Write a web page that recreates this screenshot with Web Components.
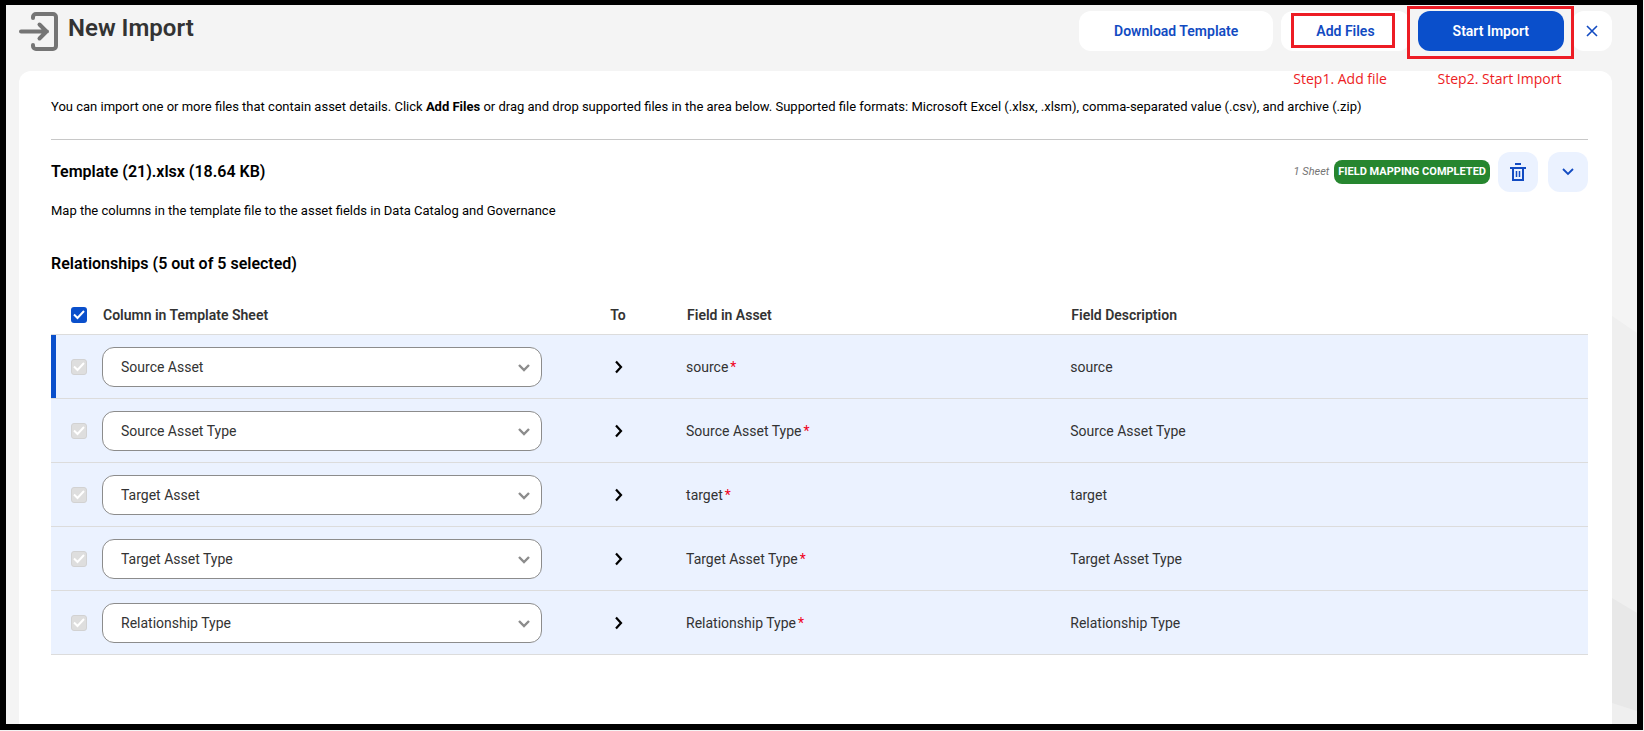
<!DOCTYPE html>
<html lang="en">
<head>
<meta charset="utf-8">
<title>New Import</title>
<style>
  * { box-sizing: border-box; }
  body {
    margin: 0;
    font-family: Roboto, "Liberation Sans", sans-serif;
    font-size: 14px;
    line-height: 20px;
    color: #333;
    background: #f4f4f4;
  }
</style>
</head>
<body>
<import-page>
  <page-header heading="New Import">
    <action-button>Download Template</action-button>
    <action-button note="Step1. Add file" outline="text">Add Files</action-button>
    <action-button primary note="Step2. Start Import" outline="button">Start Import</action-button>
    <action-button icon="close" label="Close"></action-button>
  </page-header>
  <import-panel>
    <span slot="intro">You can import one or more files that contain asset details. Click <b>Add Files</b> or drag and drop supported files in the area below. Supported file formats: Microsoft Excel (.xlsx, .xlsm), comma-separated value (.csv), and archive (.zip)</span>
    <file-summary name="Template (21).xlsx (18.64 KB)" sheets="1 Sheet" status="Field mapping completed">Map the columns in the template file to the asset fields in Data Catalog and Governance</file-summary>
    <mapping-table heading="Relationships (5 out of 5 selected)"></mapping-table>
  </import-panel>
</import-page>

<script>
"use strict";

////////////////////////////////////////////
// Constants
const BLUE = "#0a4fcb";
const LINK_BLUE = "#124bc2";
const PALE_BLUE = "#ebf2ff";
const ANNOTATION_RED = "#ed1c24";

const MAPPINGS = [
  { column: "Source Asset", field: "source" },
  { column: "Source Asset Type", field: "Source Asset Type" },
  { column: "Target Asset", field: "target" },
  { column: "Target Asset Type", field: "Target Asset Type" },
  { column: "Relationship Type", field: "Relationship Type" },
];

const ICONS = {
  import: `<svg width="40" height="40" viewBox="0 0 40 40" fill="none" stroke="#757575" stroke-width="4" stroke-linecap="round" stroke-linejoin="round" aria-hidden="true"><path d="M14 7V6a3 3 0 0 1 3-3h17a3 3 0 0 1 3 3v29a3 3 0 0 1-3 3H17a3 3 0 0 1-3-3v-1M2 20.500h26M20.500 13.500l7 7-7 7"/></svg>`,
  close: `<svg width="12" height="12" viewBox="0 0 12 12" fill="none" stroke="currentColor" stroke-width="1.600" aria-hidden="true"><path d="M1 1l10 10M11 1L1 11"/></svg>`,
  trash: `<svg width="16" height="18" viewBox="0 0 16 18" fill="none" stroke="currentColor" aria-hidden="true"><path d="M5 1h6" stroke-width="2"/><path d="M0 5h16" stroke-width="2"/><path d="M3 5v12h10V5" stroke-width="2"/><path d="M6.500 8v6M9.500 8v6" stroke-width="1.500"/></svg>`,
  down: `<svg width="12" height="8" viewBox="0 0 12 8" fill="none" stroke="currentColor" stroke-width="1.800" aria-hidden="true"><path d="M1 1l5 5 5-5"/></svg>`,
  right: `<svg width="8" height="14" viewBox="0 0 8 14" fill="none" stroke="#000" stroke-width="2.200" aria-hidden="true"><path d="M1 1.500l5 5.500-5 5.500"/></svg>`,
};

////////////////////////////////////////////
// Base
class BaseElement extends HTMLElement {
  constructor() {
    super();
    this._root = this.attachShadow({ mode: "open" });
  }

  connectedCallback() {
    this._root.innerHTML = `<style>* { box-sizing: border-box; }</style>` + this.render();
  }

  attr(name) {
    return this.getAttribute(name) ?? "";
  }
}

////////////////////////////////////////////
// Page shell: black frame, grey backdrop with faint facets down the right edge
class ImportPage extends BaseElement {
  render() {
    return `
      <style>
        :host {
          display: flex;
          min-height: 100vh;
          padding: 0 1px 1px 0;
        }
        .frame {
          position: relative;
          flex: 1;
          display: flex;
          flex-direction: column;
          min-width: 0;
          padding: 6px 25px 0 13px;
          border: solid #000;
          border-width: 5px 6px 6px;
          background: #f4f4f4;
        }
        .facets {
          position: absolute;
          right: 0;
          bottom: 0;
        }
      </style>
      <div class="frame">
        <svg class="facets" width="25" height="408" viewBox="0 0 25 408" aria-hidden="true">
          <path fill="#efefef" d="M0 0l25 17v391H0z"/>
          <path fill="#e8e8e8" d="M0 282l25 15v98l-25-8z"/>
        </svg>
        <slot></slot>
      </div>
    `;
  }
}

class PageHeader extends BaseElement {
  render() {
    return `
      <style>
        :host {
          display: flex;
          align-items: flex-start;
          justify-content: space-between;
          height: 60px;
        }
        .title {
          display: flex;
          gap: 9px;
        }
        h1 {
          margin: 0;
          font-size: 24px;
          line-height: 34px;
          font-weight: 600;
        }
        .actions {
          display: flex;
          gap: 8px;
        }
      </style>
      <div class="title">${ICONS.import}<h1>${this.attr("heading")}</h1></div>
      <div class="actions"><slot></slot></div>
    `;
  }
}

/**
 * Button of the page header. "note" adds a red caption below it, "outline" says whether the red frame goes round the text or the whole button.
 */
class ActionButton extends BaseElement {
  render() {
    const icon = this.attr("icon");
    const outline = this.attr("outline");
    return `
      <style>
        :host {
          display: block;
          position: relative;
        }
        button {
          display: flex;
          align-items: center;
          justify-content: center;
          height: 40px;
          min-width: 40px;
          padding: 0 ${icon ? 0 : 35}px 1px;
          border: 0;
          border-radius: 12px;
          background: #fff;
          color: ${LINK_BLUE};
          font: 600 14px/20px Roboto, "Liberation Sans", sans-serif;
        }
        :host([primary]) button {
          background: ${BLUE};
          color: #fff;
        }
        .outline {
          position: absolute;
          border: 3px solid ${ANNOTATION_RED};
          pointer-events: none;
        }
        .outline.text { inset: 2px 15px 3px 10px; }
        .outline.button { inset: -5px -10px -8px -11px; z-index: 1; }
        .note {
          position: absolute;
          top: 58px;
          left: 12px;
          font: 14px/20px "Open Sans", "Noto Sans", sans-serif;
          white-space: nowrap;
          color: ${ANNOTATION_RED};
        }
        :host([primary]) .note { left: 20px; }
      </style>
      <button type="button" aria-label="${this.attr("label") || this.textContent}">${ICONS[icon] ?? ""}<slot></slot></button>
      ${outline ? `<span class="outline ${outline}"></span><span class="note">${this.attr("note")}</span>` : ""}
    `;
  }
}

////////////////////////////////////////////
// Panel
class ImportPanel extends BaseElement {
  render() {
    return `
      <style>
        :host {
          flex: 1;
          display: block;
          padding: 26px 24px 0 32px;
          border-radius: 12px 12px 0 0;
          background: #fff;
          color: #000;
        }
        .intro {
          margin: 0;
          padding-bottom: 22px;
          border-bottom: 1px solid #c8c8c8;
          font-size: 13px;
        }
      </style>
      <p class="intro"><slot name="intro"></slot></p>
      <slot></slot>
    `;
  }
}

class FileSummary extends BaseElement {
  render() {
    return `
      <style>
        :host { display: block; }
        .bar {
          display: flex;
          align-items: center;
          justify-content: space-between;
          margin-top: 12px;
        }
        h2 {
          margin: 0;
          font-size: 16px;
          font-weight: 600;
        }
        .tools {
          display: flex;
          align-items: center;
          gap: 8px;
        }
        .status {
          display: flex;
          align-items: center;
          gap: 5px;
        }
        i {
          font-size: 11px;
          color: #757575;
        }
        .badge {
          height: 24px;
          padding: 0 4px;
          border-radius: 8px;
          background: #26862f;
          color: #fff;
          font-size: 11px;
          line-height: 24px;
          font-weight: 700;
          text-transform: uppercase;
        }
        .icons {
          display: flex;
          gap: 10px;
        }
        button {
          display: grid;
          place-items: center;
          width: 40px;
          height: 40px;
          padding: 0;
          border: 0;
          border-radius: 12px;
          background: ${PALE_BLUE};
          color: ${LINK_BLUE};
        }
        p {
          margin: 9px 0 0;
          font-size: 13px;
        }
      </style>
      <div class="bar">
        <h2>${this.attr("name")}</h2>
        <div class="tools">
          <div class="status"><i>${this.attr("sheets")}</i><span class="badge">${this.attr("status")}</span></div>
          <div class="icons">
            <button type="button" aria-label="Delete file">${ICONS.trash}</button>
            <button type="button" aria-label="Collapse">${ICONS.down}</button>
          </div>
        </div>
      </div>
      <p><slot></slot></p>
    `;
  }
}

////////////////////////////////////////////
// Form controls
class CheckBox extends BaseElement {
  render() {
    return `
      <style>
        :host {
          display: grid;
          width: 16px;
          height: 16px;
        }
        input, svg { grid-area: 1 / 1; }
        input {
          appearance: none;
          width: 16px;
          height: 16px;
          margin: 0;
          border-radius: 3px;
          background: ${BLUE};
        }
        input:disabled {
          border: 1px solid #d2d2d2;
          background: #dedede;
        }
        svg { pointer-events: none; z-index: 1; }
      </style>
      <input type="checkbox" aria-label="${this.attr("label")}" checked ${this.hasAttribute("disabled") ? "disabled" : ""}>
      <svg width="16" height="16" viewBox="0 0 16 16" fill="none" stroke="#fff" stroke-width="2" aria-hidden="true"><path d="M3 7.500l3.500 3.500 6.500-7"/></svg>
    `;
  }
}

class SelectBox extends BaseElement {
  render() {
    const options = MAPPINGS.map(
      ({ column }) => `<option ${column === this.attr("value") ? "selected" : ""}>${column}</option>`
    ).join("");
    return `
      <style>
        :host {
          display: grid;
          align-items: center;
        }
        select, svg { grid-area: 1 / 1; }
        select {
          appearance: none;
          width: 100%;
          height: 40px;
          padding: 0 40px 0 18px;
          border: 1px solid #8c8c8c;
          border-radius: 12px;
          background: #fff;
          color: #333;
          font: 14px/20px Roboto, "Liberation Sans", sans-serif;
        }
        svg {
          justify-self: end;
          margin: 3px 12px 0 0;
          color: #8c8c8c;
          stroke-width: 2.400;
          pointer-events: none;
          z-index: 1;
        }
      </style>
      <select aria-label="${this.attr("label")}">${options}</select>
      ${ICONS.down}
    `;
  }
}

////////////////////////////////////////////
// Mapping table
class MappingTable extends BaseElement {
  render() {
    return `
      <style>
        :host { display: block; }
        h3 {
          margin: 33px 0 0;
          font-size: 16px;
          font-weight: 600;
        }
        table {
          width: 100%;
          margin-top: 21px;
          table-layout: fixed;
          border-collapse: separate;
          border-spacing: 0;
          color: #333;
        }
        th, td {
          padding: 0;
          text-align: left;
          border-bottom: 1px solid #dcdcdc;
        }
        th {
          height: 40px;
          font-weight: 600;
        }
        th + th { padding-left: 1px; }
        td {
          height: 64px;
          background: ${PALE_BLUE};
        }
        .check { width: 51px; }
        .column { width: 33%; }
        .to { width: 5%; }
        .field { width: 25%; }
        check-box { margin-left: 20px; }
        select-box { width: 440px; max-width: calc(100% - 20px); }
        tbody tr:first-child td:first-child { box-shadow: inset 5px 0 ${BLUE}; }
        .arrow svg { display: block; margin-left: 6px; }
        .required { padding-left: 2px; color: #f00020; }
      </style>
      <h3>${this.attr("heading")}</h3>
      <table>
        <thead>
          <tr>
            <th class="check"><check-box label="Select all"></check-box></th>
            <th class="column">Column in Template Sheet</th>
            <th class="to">To</th>
            <th class="field">Field in Asset</th>
            <th>Field Description</th>
          </tr>
        </thead>
        <tbody>${MAPPINGS.map(this.renderRow).join("")}</tbody>
      </table>
    `;
  }

  renderRow({ column, field }) {
    return `
      <tr>
        <td><check-box label="Select ${column}" disabled></check-box></td>
        <td><select-box label="Column for ${field}" value="${column}"></select-box></td>
        <td class="arrow">${ICONS.right}</td>
        <td>${field}<span class="required">*</span></td>
        <td>${field}</td>
      </tr>
    `;
  }
}

////////////////////////////////////////////
// Executed Code
window.customElements.define("import-page", ImportPage);
window.customElements.define("page-header", PageHeader);
window.customElements.define("action-button", ActionButton);
window.customElements.define("import-panel", ImportPanel);
window.customElements.define("file-summary", FileSummary);
window.customElements.define("check-box", CheckBox);
window.customElements.define("select-box", SelectBox);
window.customElements.define("mapping-table", MappingTable);
</script>
</body>
</html>
